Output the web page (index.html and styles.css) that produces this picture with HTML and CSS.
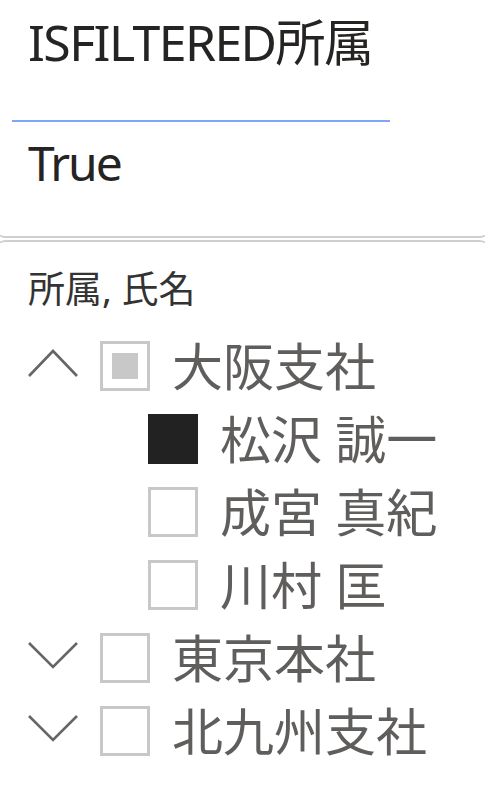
FILE: index.html
```html
<!DOCTYPE html>
<html lang="ja">
<head>
  <meta charset="UTF-8">
  <meta name="viewport" content="width=device-width, initial-scale=1.0">
  <title>ISFILTERED所属</title>
  <link rel="stylesheet" href="styles.css">
</head>
<body>
  <!-- Card: measure -->
  <div class="card card-top">
    <div class="measure-name">ISFILTERED所属</div>
    <div class="measure-value">True</div>
  </div>

  <!-- Slicer: hierarchy -->
  <div class="card card-slicer">
    <div class="slicer-header">所属, 氏名</div>
    <div class="tree">
      <div class="row">
        <svg class="chevron" viewBox="0 0 50 30"><polyline points="1,28 25,3 49,28"/></svg>
        <span class="box partial"></span>
        <span class="label">大阪支社</span>
      </div>
      <div class="row child">
        <span class="box checked"></span>
        <span class="label">松沢 誠一</span>
      </div>
      <div class="row child">
        <span class="box"></span>
        <span class="label">成宮 真紀</span>
      </div>
      <div class="row child">
        <span class="box"></span>
        <span class="label">川村 匡</span>
      </div>
      <div class="row">
        <svg class="chevron" viewBox="0 0 50 30"><polyline points="1,3 25,27 49,3"/></svg>
        <span class="box"></span>
        <span class="label">東京本社</span>
      </div>
      <div class="row">
        <svg class="chevron" viewBox="0 0 50 30"><polyline points="1,3 25,27 49,3"/></svg>
        <span class="box"></span>
        <span class="label">北九州支社</span>
      </div>
    </div>
  </div>
</body>
</html>
```

FILE: styles.css
```css
body {
  margin: 0;
  background: #fff;
  font-family: "Noto Sans", "Noto Sans CJK JP", sans-serif;
  overflow: hidden;
}
.card {
  margin: 0 -6px;
  padding: 0 6px;
  background: #fff;
}
.card-top {
  height: 236px;
  border-bottom: 2px solid #cfcfcf;
  border-radius: 0 0 12px 12px;
  margin-bottom: 2px;
}
.measure-name {
  margin-left: 12px;
  width: 362px;
  padding-left: 16px;
  height: 120px;
  line-height: 84px;
  font-size: 50px;
  letter-spacing: -1.6px;
  white-space: nowrap;
  color: #252423;
  border-bottom: 2px solid #7ea8f6;
}
.measure-value {
  padding-left: 28px;
  font-size: 48px;
  letter-spacing: -2px;
  line-height: 82px;
  color: #252423;
}
.card-slicer {
  border-top: 2px solid #cfcfcf;
  border-radius: 12px 12px 0 0;
  padding-top: 22px;
  height: 528px;
}
.slicer-header {
  padding-left: 28px;
  font-size: 37px;
  line-height: 50px;
  color: #333;
}
.tree {
  margin-top: 15px;
  padding-left: 28px;
}
.row {
  display: flex;
  align-items: center;
  gap: 22px;
  height: 73px;
}
.row.child {
  padding-left: 120px;
}
.chevron {
  width: 50px;
  height: 30px;
  margin-top: -5px;
  fill: none;
  stroke: #666;
  stroke-width: 2.6;
}
.box {
  width: 50px;
  height: 50px;
  box-sizing: border-box;
  border: 3px solid #c8c8c8;
  display: flex;
  align-items: center;
  justify-content: center;
}
.box.partial::after {
  content: "";
  width: 26px;
  height: 26px;
  background: #c8c8c8;
}
.box.checked {
  background: #222;
  border-color: #222;
}
.label {
  font-size: 51px;
  color: #605e5c;
  line-height: 60px;
  white-space: nowrap;
}
```
